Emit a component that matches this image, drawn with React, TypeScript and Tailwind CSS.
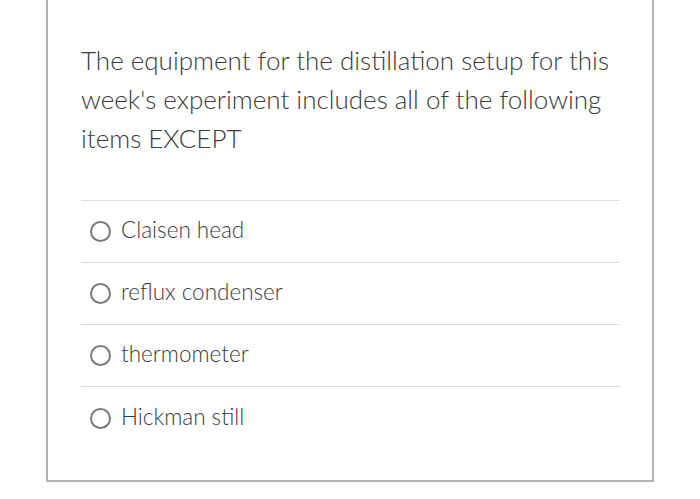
export default function App() {
  const options = ["Claisen head", "reflux condenser", "thermometer", "Hickman still"];
  return (
    <div className="w-[700px] h-[499px] bg-white overflow-hidden" style={{ fontFamily: "Lato, 'Open Sans', sans-serif" }}>
      <div className="ml-[46px] -mt-[20px] w-[608px] h-[502px] border-2 border-[#b3b3b3] pl-[33px] pr-[32px] pt-[59px]">
        <p className="text-[26px] leading-[39px] text-[#3a3a3a] font-light">
          The equipment for the distillation setup for this week's experiment includes all of the following items EXCEPT
        </p>
        <div className="mt-[42px] border-t border-[#dcdcdc]">
          {options.map((o, i) => (
            <div
              key={o}
              className={`h-[62px] flex items-center gap-[10px] pl-[9px] ${i < options.length - 1 ? "border-b border-[#dcdcdc]" : ""}`}
            >
              <span className="w-[21px] h-[21px] rounded-full border-2 border-[#7a7a7a]" />
              <span className="text-[22.5px] text-[#3a3a3a] font-light -mt-[3px]">{o}</span>
            </div>
          ))}
        </div>
      </div>
    </div>
  );
}
